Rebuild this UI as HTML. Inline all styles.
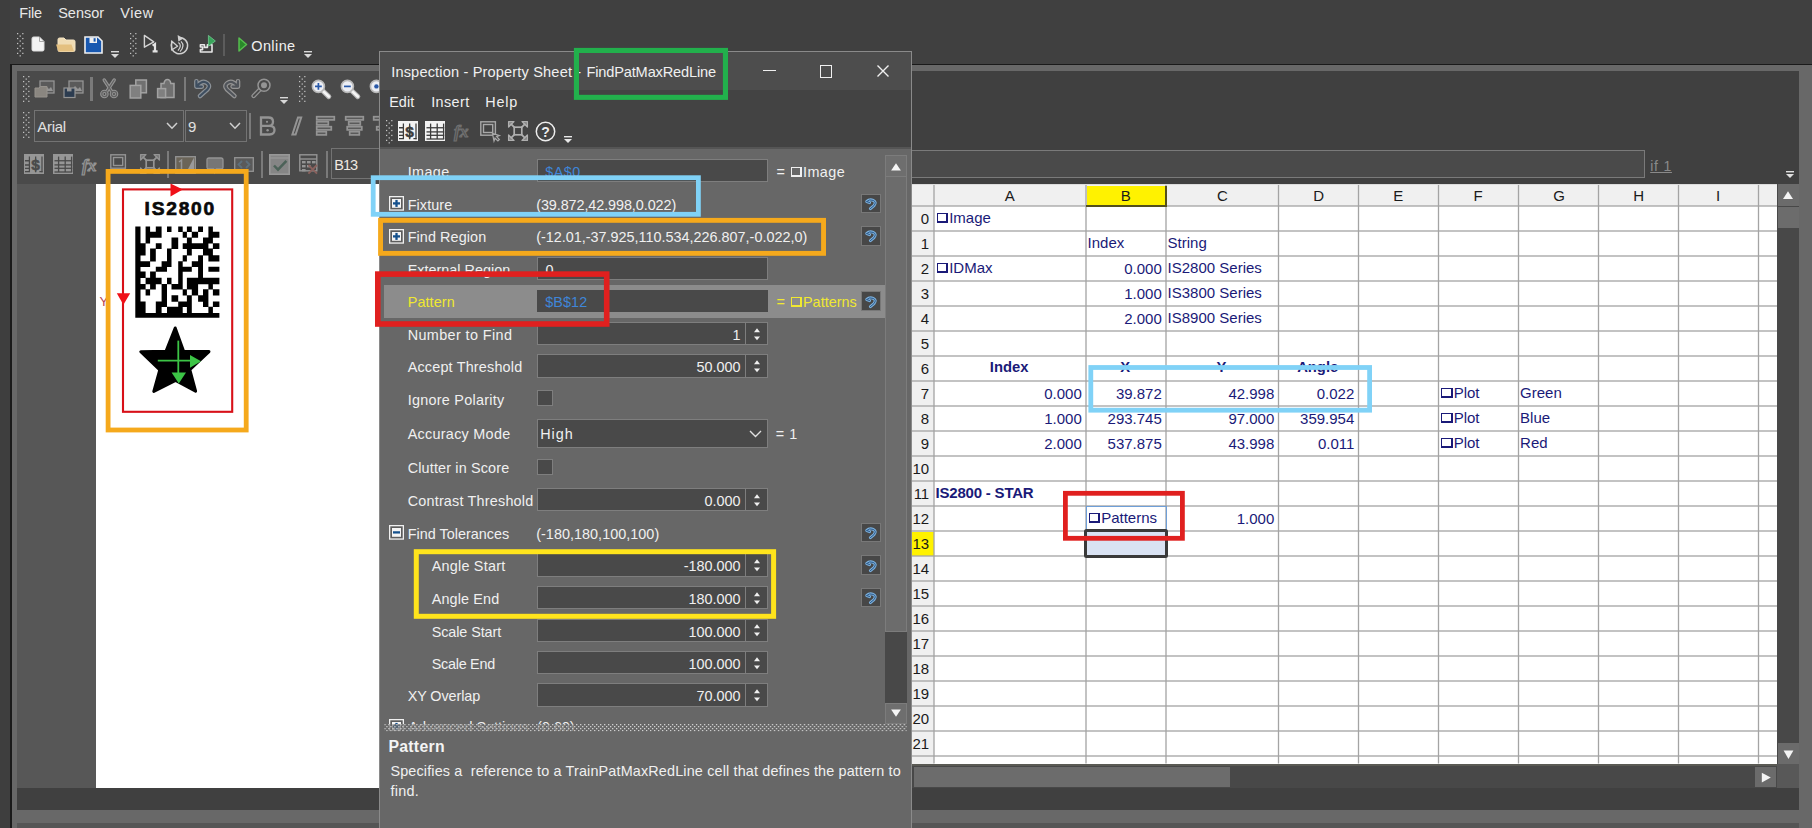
<!DOCTYPE html>
<html lang="en"><head><meta charset="utf-8"><title>In-Sight Explorer</title>
<style>
html,body{margin:0;padding:0;}
body{width:1812px;height:828px;overflow:hidden;background:#404040;position:relative;
font-family:"Liberation Sans",sans-serif;}
.a{position:absolute;box-sizing:border-box;}
.t{position:absolute;white-space:pre;line-height:1;}
svg{overflow:visible;}
</style></head>
<body>
<div class="a" style="left:0px;top:0px;width:10px;height:828px;background:#3e3e3e;"></div>
<div class="a" style="left:10px;top:64px;width:1802px;height:764px;background:#1a1a1a;"></div>
<div class="a" style="left:11.5px;top:65px;width:1801px;height:763px;background:#686868;"></div>
<div class="a" style="left:17px;top:71px;width:1782px;height:113px;background:#404040;"></div>
<div class="a" style="left:17px;top:71px;width:894px;height:113px;background:#4a4a4a;"></div>
<div class="a" style="left:17px;top:788px;width:1782px;height:22px;background:#404040;"></div>
<div class="a" style="left:17px;top:810px;width:1782px;height:13px;background:#686868;"></div>
<div class="a" style="left:17px;top:823px;width:1782px;height:5px;background:#555555;"></div>
<span id="t0" class="t" style="top:5.73px;font-size:14.5px;color:#e8e8e8;left:19.20px;letter-spacing:-0.125px;">File</span>
<span id="t1" class="t" style="top:5.73px;font-size:14.5px;color:#e8e8e8;left:58.20px;letter-spacing:0.009px;">Sensor</span>
<span id="t2" class="t" style="top:5.73px;font-size:14.5px;color:#e8e8e8;left:120.20px;letter-spacing:0.609px;">View</span>
<svg class="a" style="left:17px;top:33px;" width="7" height="24" viewBox="0 0 7 24"><g fill="#c4c4c4"><rect x="0" y="0.00" width="1.25" height="1.25"/><rect x="5.2" y="0.00" width="1.25" height="1.25"/><rect x="2.6" y="2.47" width="1.25" height="1.25"/><rect x="0" y="4.94" width="1.25" height="1.25"/><rect x="5.2" y="4.94" width="1.25" height="1.25"/><rect x="2.6" y="7.41" width="1.25" height="1.25"/><rect x="0" y="9.88" width="1.25" height="1.25"/><rect x="5.2" y="9.88" width="1.25" height="1.25"/><rect x="2.6" y="12.35" width="1.25" height="1.25"/><rect x="0" y="14.82" width="1.25" height="1.25"/><rect x="5.2" y="14.82" width="1.25" height="1.25"/><rect x="2.6" y="17.29" width="1.25" height="1.25"/><rect x="0" y="19.76" width="1.25" height="1.25"/><rect x="5.2" y="19.76" width="1.25" height="1.25"/><rect x="2.6" y="22.23" width="1.25" height="1.25"/></g></svg>
<svg class="a" style="left:31px;top:36px;" width="14" height="16" viewBox="0 0 14 16"><path d="M1 2.5Q1 1 2.5 1H8.5L13 5.5V13.5Q13 15 11.5 15H2.5Q1 15 1 13.5Z" fill="#f4f4f4" stroke="#dcdcdc" stroke-width="1"/><path d="M8.5 1V5.5H13" fill="none" stroke="#a8a8a8" stroke-width="1"/></svg>
<svg class="a" style="left:55px;top:36px;" width="22" height="17" viewBox="0 0 22 17"><path d="M3 3.5Q3 2 4.5 2H9l2 2h7.5Q20 4 20 5.5V14Q20 15.5 18.5 15.5H4.5Q3 15.5 3 14Z" fill="#f0dcb4" stroke="#f4e4c4" stroke-width="1"/><path d="M1 8.5h15.5l2.5 7H3.5Z" fill="#e4c080"/></svg>
<svg class="a" style="left:84px;top:36px;" width="19" height="18" viewBox="0 0 19 18"><path d="M1 1h13l4 4v12H1Z" fill="#1858b0" stroke="#f0f0f0" stroke-width="1.6"/><rect x="5.5" y="1.5" width="7.5" height="5.5" fill="#f0f0f0"/><rect x="9.6" y="2.2" width="2" height="3.4" fill="#1858b0"/></svg>
<svg class="a" style="left:111px;top:50.5px;" width="8" height="7" viewBox="0 0 8 7"><g fill="#d8d8d8"><rect x="0" y="0" width="8" height="1.4"/><path d="M0 3h8l-4 4z"/></g></svg>
<svg class="a" style="left:130px;top:33px;" width="7" height="24" viewBox="0 0 7 24"><g fill="#c4c4c4"><rect x="0" y="0.00" width="1.25" height="1.25"/><rect x="5.2" y="0.00" width="1.25" height="1.25"/><rect x="2.6" y="2.47" width="1.25" height="1.25"/><rect x="0" y="4.94" width="1.25" height="1.25"/><rect x="5.2" y="4.94" width="1.25" height="1.25"/><rect x="2.6" y="7.41" width="1.25" height="1.25"/><rect x="0" y="9.88" width="1.25" height="1.25"/><rect x="5.2" y="9.88" width="1.25" height="1.25"/><rect x="2.6" y="12.35" width="1.25" height="1.25"/><rect x="0" y="14.82" width="1.25" height="1.25"/><rect x="5.2" y="14.82" width="1.25" height="1.25"/><rect x="2.6" y="17.29" width="1.25" height="1.25"/><rect x="0" y="19.76" width="1.25" height="1.25"/><rect x="5.2" y="19.76" width="1.25" height="1.25"/><rect x="2.6" y="22.23" width="1.25" height="1.25"/></g></svg>
<svg class="a" style="left:143px;top:34px;" width="16" height="20" viewBox="0 0 16 20"><path d="M1.4 1.4V13.2L10.8 7.8Z" fill="none" stroke="#d4d4d4" stroke-width="1.4" stroke-linejoin="round"/><path d="M9.6 11.6L12 10V16.4M9.6 17.4H14.6" fill="none" stroke="#e4e4e4" stroke-width="2.2"/></svg>
<svg class="a" style="left:169px;top:34px;" width="20" height="22" viewBox="0 0 20 22"><path d="M10.4 3.4A8.2 8.2 0 1 1 3 8" fill="none" stroke="#d0d0d0" stroke-width="1.5"/><path d="M2.6 7L2.6 16L8.6 12.2Z" fill="none" stroke="#d0d0d0" stroke-width="1.3" stroke-linejoin="round"/><path d="M8.6 1L14.4 4.6L9.4 7.4Z" fill="#d0d0d0"/><path d="M9.4 8.6Q13.4 11.4 9 16.6M12 7.4Q16.4 12 11 17.6" fill="none" stroke="#d0d0d0" stroke-width="1.2"/></svg>
<svg class="a" style="left:198px;top:34px;" width="19" height="20" viewBox="0 0 19 20"><path d="M2.4 10.8H6.4V13.4H9.4V10.8H14V18H2.4V15.6H4.6V13H2.4Z" fill="none" stroke="#e6e6e6" stroke-width="1.6" stroke-linejoin="round"/><path d="M10.4 1.4L17.4 7L10.4 12.2Z" fill="#38a45a" stroke="#7cd09a" stroke-width=".7"/></svg>
<div class="a" style="left:223.10000000000002px;top:33.5px;width:2.4px;height:22.1px;background:#5c5c5c;"></div>
<svg class="a" style="left:238px;top:37px;" width="10" height="15" viewBox="0 0 10 15"><path d="M1 1L8.6 7.5L1 14Z" fill="#2a8a2a" stroke="#58c050" stroke-width="1.4" stroke-linejoin="round"/></svg>
<span id="t3" class="t" style="top:38.83px;font-size:14.5px;color:#f0f0f0;left:251.20px;letter-spacing:0.416px;">Online</span>
<svg class="a" style="left:304px;top:50.5px;" width="8" height="7" viewBox="0 0 8 7"><g fill="#d8d8d8"><rect x="0" y="0" width="8" height="1.4"/><path d="M0 3h8l-4 4z"/></g></svg>
<svg class="a" style="left:23.2px;top:76px;" width="7" height="26" viewBox="0 0 7 26"><g fill="#c4c4c4"><rect x="0" y="0.00" width="1.25" height="1.25"/><rect x="5.2" y="0.00" width="1.25" height="1.25"/><rect x="2.6" y="2.47" width="1.25" height="1.25"/><rect x="0" y="4.94" width="1.25" height="1.25"/><rect x="5.2" y="4.94" width="1.25" height="1.25"/><rect x="2.6" y="7.41" width="1.25" height="1.25"/><rect x="0" y="9.88" width="1.25" height="1.25"/><rect x="5.2" y="9.88" width="1.25" height="1.25"/><rect x="2.6" y="12.35" width="1.25" height="1.25"/><rect x="0" y="14.82" width="1.25" height="1.25"/><rect x="5.2" y="14.82" width="1.25" height="1.25"/><rect x="2.6" y="17.29" width="1.25" height="1.25"/><rect x="0" y="19.76" width="1.25" height="1.25"/><rect x="5.2" y="19.76" width="1.25" height="1.25"/><rect x="2.6" y="22.23" width="1.25" height="1.25"/><rect x="0" y="24.70" width="1.25" height="1.25"/><rect x="5.2" y="24.70" width="1.25" height="1.25"/></g></svg>
<svg class="a" style="left:34px;top:80px;" width="21" height="18" viewBox="0 0 21 18"><rect x="6" y="1" width="14" height="12" fill="#5a5a5a" stroke="#949494" stroke-width="1.3"/><path d="M8 11l4-5l3 3l2-2l2 4z" fill="#949494"/><path d="M1 8h4l1.5-1.5H13V17H1Z" fill="#8a8680" stroke="#96928c" stroke-width="1"/></svg>
<svg class="a" style="left:63px;top:80px;" width="21" height="18" viewBox="0 0 21 18"><rect x="6" y="1" width="14" height="12" fill="#5a5a5a" stroke="#949494" stroke-width="1.3"/><path d="M8 11l4-5l3 3l2-2l2 4z" fill="#949494"/><rect x="1" y="8" width="11" height="9.5" fill="#2c3c50" stroke="#949494" stroke-width="1.2"/><rect x="4" y="8" width="4.5" height="3.4" fill="#949494"/></svg>
<div class="a" style="left:90.39999999999999px;top:77px;width:2.4px;height:24px;background:#7a7a7a;"></div>
<svg class="a" style="left:100px;top:78px;" width="19" height="21" viewBox="0 0 19 21"><g fill="none" stroke="#949494" stroke-width="3.4" stroke-linecap="round"><path d="M4.2 2L11.6 13.4"/><path d="M14.2 2L6.8 13.4"/><circle cx="4.4" cy="16" r="2.6"/><circle cx="14" cy="16" r="2.6"/></g><g fill="none" stroke="#626262" stroke-width="1.2" stroke-linecap="round"><path d="M4.2 2L11.6 13.4"/><path d="M14.2 2L6.8 13.4"/><circle cx="4.4" cy="16" r="2.6"/><circle cx="14" cy="16" r="2.6"/></g></svg>
<svg class="a" style="left:129px;top:79px;" width="19" height="20" viewBox="0 0 19 20"><rect x="6.8" y="1" width="10.6" height="12.8" fill="#707070" stroke="#a2a2a2" stroke-width="1.5"/><rect x="1.2" y="6.4" width="10.6" height="12.6" fill="#808080" stroke="#a2a2a2" stroke-width="1.5"/></svg>
<svg class="a" style="left:156px;top:78px;" width="19" height="21" viewBox="0 0 19 21"><path d="M5 5.4h3Q8.6 1.4 11.4 1.4T14.8 5.4H18V19.6H5Z" fill="#707070" stroke="#a2a2a2" stroke-width="1.5"/><rect x="1.6" y="10.6" width="8" height="9" fill="#808080" stroke="#a2a2a2" stroke-width="1.5"/></svg>
<div class="a" style="left:183.8px;top:77px;width:2.4px;height:24px;background:#7a7a7a;"></div>
<svg class="a" style="left:193px;top:78px;" width="20" height="21" viewBox="0 0 20 21"><path d="M3.4 3.2V8.6H8.8M4 8Q9.6 1.6 14.2 5.2T11.4 14L7 18" fill="none" stroke="#8c9298" stroke-width="4.6" stroke-linecap="round" stroke-linejoin="round"/><path d="M3.4 3.2V8.6H8.8M4 8Q9.6 1.6 14.2 5.2T11.4 14L7 18" fill="none" stroke="#3e4e60" stroke-width="2.2" stroke-linecap="round" stroke-linejoin="round"/></svg>
<svg class="a" style="left:222px;top:78px;" width="20" height="21" viewBox="0 0 20 21"><g transform="translate(19.4 0) scale(-1 1)"><path d="M3.4 3.2V8.6H8.8M4 8Q9.6 1.6 14.2 5.2T11.4 14L7 18" fill="none" stroke="#949494" stroke-width="4.6" stroke-linecap="round" stroke-linejoin="round"/><path d="M3.4 3.2V8.6H8.8M4 8Q9.6 1.6 14.2 5.2T11.4 14L7 18" fill="none" stroke="#50545a" stroke-width="2.2" stroke-linecap="round" stroke-linejoin="round"/></g></svg>
<svg class="a" style="left:251px;top:78px;" width="22" height="21" viewBox="0 0 22 21"><path d="M8.6 11.8L2.6 18" stroke="#949494" stroke-width="4.4" stroke-linecap="round"/><path d="M8.6 11.8L2.6 18" stroke="#4a4a4a" stroke-width="1.8" stroke-linecap="round"/><circle cx="13" cy="7.2" r="6" fill="#4a4a4a" stroke="#949494" stroke-width="1.5"/><circle cx="13" cy="7.2" r="3" fill="#949494"/></svg>
<svg class="a" style="left:280px;top:96.5px;" width="8" height="7" viewBox="0 0 8 7"><g fill="#d8d8d8"><rect x="0" y="0" width="8" height="1.4"/><path d="M0 3h8l-4 4z"/></g></svg>
<svg class="a" style="left:299.4px;top:76px;" width="7" height="26" viewBox="0 0 7 26"><g fill="#c4c4c4"><rect x="0" y="0.00" width="1.25" height="1.25"/><rect x="5.2" y="0.00" width="1.25" height="1.25"/><rect x="2.6" y="2.47" width="1.25" height="1.25"/><rect x="0" y="4.94" width="1.25" height="1.25"/><rect x="5.2" y="4.94" width="1.25" height="1.25"/><rect x="2.6" y="7.41" width="1.25" height="1.25"/><rect x="0" y="9.88" width="1.25" height="1.25"/><rect x="5.2" y="9.88" width="1.25" height="1.25"/><rect x="2.6" y="12.35" width="1.25" height="1.25"/><rect x="0" y="14.82" width="1.25" height="1.25"/><rect x="5.2" y="14.82" width="1.25" height="1.25"/><rect x="2.6" y="17.29" width="1.25" height="1.25"/><rect x="0" y="19.76" width="1.25" height="1.25"/><rect x="5.2" y="19.76" width="1.25" height="1.25"/><rect x="2.6" y="22.23" width="1.25" height="1.25"/><rect x="0" y="24.70" width="1.25" height="1.25"/><rect x="5.2" y="24.70" width="1.25" height="1.25"/></g></svg>
<svg class="a" style="left:311px;top:79px;" width="21" height="21" viewBox="0 0 21 21"><path d="M12 12L17.8 17.6" stroke="#b4b4b4" stroke-width="5" stroke-linecap="round"/><path d="M12 12L17.8 17.6" stroke="#f4f4f4" stroke-width="2.8" stroke-linecap="round"/><circle cx="7.4" cy="7.4" r="6" fill="#eceef4" stroke="#b8b8b8" stroke-width="1.6"/><path d="M4 7.4h6.8M7.4 4v6.8" stroke="#2858a8" stroke-width="1.7"/></svg>
<svg class="a" style="left:340.4px;top:79px;" width="21" height="21" viewBox="0 0 21 21"><path d="M12 12L17.8 17.6" stroke="#b4b4b4" stroke-width="5" stroke-linecap="round"/><path d="M12 12L17.8 17.6" stroke="#f4f4f4" stroke-width="2.8" stroke-linecap="round"/><circle cx="7.4" cy="7.4" r="6" fill="#eceef4" stroke="#b8b8b8" stroke-width="1.6"/><path d="M4 7.4h6.8" stroke="#2858a8" stroke-width="1.7"/></svg>
<svg class="a" style="left:368.6px;top:79px;" width="16" height="16" viewBox="0 0 16 16"><circle cx="7.4" cy="7.4" r="6" fill="#eceef4" stroke="#b8b8b8" stroke-width="1.6"/><circle cx="7.4" cy="7.4" r="2.2" fill="#2858a8"/></svg>
<svg class="a" style="left:23.2px;top:112px;" width="7" height="26" viewBox="0 0 7 26"><g fill="#c4c4c4"><rect x="0" y="0.00" width="1.25" height="1.25"/><rect x="5.2" y="0.00" width="1.25" height="1.25"/><rect x="2.6" y="2.47" width="1.25" height="1.25"/><rect x="0" y="4.94" width="1.25" height="1.25"/><rect x="5.2" y="4.94" width="1.25" height="1.25"/><rect x="2.6" y="7.41" width="1.25" height="1.25"/><rect x="0" y="9.88" width="1.25" height="1.25"/><rect x="5.2" y="9.88" width="1.25" height="1.25"/><rect x="2.6" y="12.35" width="1.25" height="1.25"/><rect x="0" y="14.82" width="1.25" height="1.25"/><rect x="5.2" y="14.82" width="1.25" height="1.25"/><rect x="2.6" y="17.29" width="1.25" height="1.25"/><rect x="0" y="19.76" width="1.25" height="1.25"/><rect x="5.2" y="19.76" width="1.25" height="1.25"/><rect x="2.6" y="22.23" width="1.25" height="1.25"/><rect x="0" y="24.70" width="1.25" height="1.25"/><rect x="5.2" y="24.70" width="1.25" height="1.25"/></g></svg>
<div class="a" style="left:34px;top:110px;width:150px;height:32px;background:#4a4a4a;border:1px solid #737373;"></div>
<span id="t4" class="t" style="top:119.30px;font-size:15px;color:#e0e0e0;left:37.20px;letter-spacing:-0.254px;">Arial</span>
<svg class="a" style="left:166px;top:122px;" width="12" height="8" viewBox="0 0 12 8"><path d="M1 1l5 5.2l5-5.2" fill="none" stroke="#d0d0d0" stroke-width="1.5"/></svg>
<div class="a" style="left:185px;top:110px;width:62px;height:32px;background:#4a4a4a;border:1px solid #737373;"></div>
<span id="t5" class="t" style="top:119.30px;font-size:15px;color:#e0e0e0;left:188.00px;">9</span>
<svg class="a" style="left:229px;top:122px;" width="12" height="8" viewBox="0 0 12 8"><path d="M1 1l5 5.2l5-5.2" fill="none" stroke="#d0d0d0" stroke-width="1.5"/></svg>
<div class="a" style="left:248.8px;top:113px;width:2.4px;height:26px;background:#7a7a7a;"></div>
<svg class="a" style="left:259px;top:116px;" width="18" height="20" viewBox="0 0 18 20"><path d="M2 1.5h7.5Q14 1.5 14 5.7T9.5 9.8H2Zm0 8.3h8.5Q15.5 9.8 15.5 14T10.5 18.5H2Z" fill="none" stroke="#949494" stroke-width="2.3"/><circle cx="8" cy="5.8" r="1.1" fill="#949494"/><circle cx="8.6" cy="14.2" r="1.2" fill="#949494"/></svg>
<svg class="a" style="left:291px;top:116px;" width="12" height="20" viewBox="0 0 12 20"><path d="M7 1.5h3.2L4.6 18.5H1.4Z" fill="none" stroke="#949494" stroke-width="2"/></svg>
<svg class="a" style="left:315.5px;top:116px;" width="20" height="20" viewBox="0 0 20 20"><rect x="0.7" y="0.7" width="17.6" height="3.2" fill="#5a5a5a" stroke="#949494" stroke-width="1.7"/><rect x="0.7" y="5.7" width="11.6" height="3.2" fill="#5a5a5a" stroke="#949494" stroke-width="1.7"/><rect x="0.7" y="10.7" width="14.6" height="3.2" fill="#5a5a5a" stroke="#949494" stroke-width="1.7"/><rect x="0.7" y="15.7" width="9.6" height="3.2" fill="#5a5a5a" stroke="#949494" stroke-width="1.7"/></svg>
<svg class="a" style="left:345px;top:116px;" width="20" height="20" viewBox="0 0 20 20"><rect x="0.7" y="0.7" width="17.6" height="3.2" fill="#5a5a5a" stroke="#949494" stroke-width="1.7"/><rect x="3.7" y="5.7" width="11.6" height="3.2" fill="#5a5a5a" stroke="#949494" stroke-width="1.7"/><rect x="2.2" y="10.7" width="14.6" height="3.2" fill="#5a5a5a" stroke="#949494" stroke-width="1.7"/><rect x="4.7" y="15.7" width="9.6" height="3.2" fill="#5a5a5a" stroke="#949494" stroke-width="1.7"/></svg>
<svg class="a" style="left:373px;top:116px;" width="20" height="20" viewBox="0 0 20 20"><rect x="0.7" y="0.7" width="17.6" height="3.2" fill="#5a5a5a" stroke="#949494" stroke-width="1.7"/><rect x="6.7" y="5.7" width="11.6" height="3.2" fill="#5a5a5a" stroke="#949494" stroke-width="1.7"/><rect x="3.7" y="10.7" width="14.6" height="3.2" fill="#5a5a5a" stroke="#949494" stroke-width="1.7"/><rect x="8.7" y="15.7" width="9.6" height="3.2" fill="#5a5a5a" stroke="#949494" stroke-width="1.7"/></svg>
<svg class="a" style="left:24px;top:154.3px;" width="20" height="20" viewBox="0 0 20 20"><rect x="0" y="0" width="20" height="20" fill="#969696"/><g stroke="#4a4a4a" stroke-width="1.3" fill="none"><path d="M1 6.75h4.6M1 11h4.6M1 14.3h4.6M1 17.6h5M15.4 17.6h3.2"/><path d="M5.4 2.6V17.6M18 2.6V18.2" stroke-width="1.25"/></g><text x="11.6" y="15.9" font-size="15.4" font-weight="bold" text-anchor="middle" fill="#4a4a4a" stroke="#4a4a4a" stroke-width=".5" font-family="Liberation Sans, sans-serif">$</text><path d="M11.65 2.4v15.8" stroke="#4a4a4a" stroke-width="1.3"/></svg>
<svg class="a" style="left:53px;top:154.3px;" width="20" height="20" viewBox="0 0 20 20"><rect x="0" y="0" width="20" height="20" fill="#969696"/><g stroke="#4a4a4a" stroke-width="1.3"><path d="M1.5 6.75h17.7"/><path d="M1.5 10.9h17.7"/><path d="M1.5 14.3h17.7"/><path d="M1.5 18h17.7"/><path d="M5.6 2.6v15.4"/><path d="M12.2 2.6v15.4"/><path d="M18.6 2.6v15.4"/></g></svg>
<svg class="a" style="left:82px;top:154.6px;" width="20" height="20" viewBox="0 0 20 20"><text x="0" y="15.5" font-size="17.5" font-style="italic" font-weight="bold" fill="#949494" fill-opacity=".3" stroke="#949494" stroke-width="1.1" font-family="Liberation Serif, serif">fx</text></svg>
<svg class="a" style="left:110.4px;top:154.3px;" width="20" height="20" viewBox="0 0 20 20"><rect x=".8" y=".8" width="14.6" height="13.4" fill="none" stroke="#949494" stroke-width="1.4"/><rect x="3.5" y="3.5" width="9.2" height="8" fill="none" stroke="#949494" stroke-width="1.4"/><path d="M14.6 15v3.2h4" fill="none" stroke="#949494" stroke-width="1.4"/></svg>
<svg class="a" style="left:139.6px;top:154.3px;" width="20" height="20" viewBox="0 0 20 20"><rect x="6.2" y="6.2" width="7.6" height="7.6" fill="none" stroke="#949494" stroke-width="1.7"/><path d="M0.6 6.0V0.6H6.0Z" fill="#949494" fill-opacity=".55" stroke="#949494" stroke-width="1.3" stroke-linejoin="round"/><path d="M2.6 2.6L6.3999999999999995 6.3999999999999995" stroke="#949494" stroke-width="1.8"/><path d="M19.4 6.0V0.6H13.999999999999998Z" fill="#949494" fill-opacity=".55" stroke="#949494" stroke-width="1.3" stroke-linejoin="round"/><path d="M17.4 2.6L13.599999999999998 6.3999999999999995" stroke="#949494" stroke-width="1.8"/><path d="M0.6 13.999999999999998V19.4H6.0Z" fill="#949494" fill-opacity=".55" stroke="#949494" stroke-width="1.3" stroke-linejoin="round"/><path d="M2.6 17.4L6.3999999999999995 13.599999999999998" stroke="#949494" stroke-width="1.8"/><path d="M19.4 13.999999999999998V19.4H13.999999999999998Z" fill="#949494" fill-opacity=".55" stroke="#949494" stroke-width="1.3" stroke-linejoin="round"/><path d="M17.4 17.4L13.599999999999998 13.599999999999998" stroke="#949494" stroke-width="1.8"/></svg>
<div class="a" style="left:166.8px;top:151px;width:2.4px;height:27px;background:#7a7a7a;"></div>
<svg class="a" style="left:175px;top:156px;" width="21" height="18" viewBox="0 0 21 18"><rect x=".7" y=".7" width="19.6" height="16.6" fill="#6a6458" stroke="#949494" stroke-width="1.3"/><path d="M11 17L19 1.5V17Z" fill="#9a9a9a"/><path d="M4 6l2.5-2V14" fill="none" stroke="#949494" stroke-width="1.5"/></svg>
<svg class="a" style="left:206px;top:157px;" width="18" height="17" viewBox="0 0 18 17"><path d="M3 1h12Q17 1 17 3v7Q17 12 15 12H10.5l-2 3.5l-1-3.5H3Q1 12 1 10V3Q1 1 3 1Z" fill="#767676" stroke="#949494" stroke-width="1.3"/></svg>
<svg class="a" style="left:234px;top:157px;" width="20" height="15" viewBox="0 0 20 15"><rect x=".7" y=".7" width="18.6" height="13.6" fill="#5a5a5a" stroke="#949494" stroke-width="1.3"/><path d="M8 4L4.5 7.5L8 11M12 4l3.5 3.5L12 11" fill="none" stroke="#5e707c" stroke-width="1.8"/></svg>
<div class="a" style="left:260.5px;top:151px;width:2.4px;height:27px;background:#7a7a7a;"></div>
<svg class="a" style="left:269px;top:154px;" width="21" height="21" viewBox="0 0 21 21"><rect x=".8" y=".8" width="19.4" height="19.4" fill="#858585" stroke="#989898" stroke-width="1.6"/><path d="M1 4h19" stroke="#989898" stroke-width="1.3"/><path d="M5 11.5l4 4.2L17.4 6.8" fill="none" stroke="#4c6258" stroke-width="2.5"/></svg>
<svg class="a" style="left:299px;top:154px;" width="21" height="22" viewBox="0 0 21 22"><g stroke="#949494" stroke-width="1.4" fill="none"><rect x=".8" y=".8" width="17" height="16"/><path d="M1 5h17"/></g><g fill="#949494"><rect x="3" y="7" width="3.6" height="2.4"/><rect x="8" y="7" width="3.6" height="2.4"/><rect x="13" y="7" width="3.6" height="2.4"/><rect x="3" y="11" width="3.6" height="2.4"/><rect x="8" y="11" width="3.6" height="2.4"/><rect x="3" y="15" width="3.6" height="2.4"/></g><path d="M9.4 11l8.6 8.6M18 11l-8.6 8.6" stroke="#8a625e" stroke-width="1.9"/></svg>
<div class="a" style="left:325.5px;top:151px;width:2.4px;height:27px;background:#7a7a7a;"></div>
<div class="a" style="left:331px;top:148px;width:60px;height:31px;background:#4a4a4a;border:1px solid #737373;"></div>
<span id="t6" class="t" style="top:157.83px;font-size:14.5px;color:#f0e8e0;left:334.20px;letter-spacing:-0.906px;">B13</span>
<div class="a" style="left:396px;top:150px;width:1249px;height:28px;background:#4a4a4a;border:1px solid #7a7a7a;"></div>
<span id="t7" class="t" style="top:159.15px;font-size:14px;color:#8a8a8a;left:1650.20px;letter-spacing:0.771px;text-decoration:underline;">if 1</span>
<svg class="a" style="left:1785.5px;top:171px;" width="8" height="7" viewBox="0 0 8 7"><g fill="#e0e0e0"><rect x="0" y="0" width="8" height="1.4"/><path d="M0 3h8l-4 4z"/></g></svg>
<div class="a" style="left:17px;top:184px;width:79px;height:604px;background:#575757;"></div>
<div class="a" style="left:95.5px;top:184px;width:300px;height:604px;background:#ffffff;"></div>
<svg class="a" style="left:0px;top:0px;" width="1812" height="828" viewBox="0 0 1812 828"><rect x="123" y="189.4" width="109.2" height="222.4" fill="none" stroke="#d81018" stroke-width="2.1"/><path d="M170.5 183.6L182.8 189.6L170.5 196.6Z" fill="#f01018"/><path d="M116.8 293.2H130.2L123.4 304.8Z" fill="#f01018"/><text x="144.6" y="215" font-size="19.2" font-weight="bold" fill="#0a0a0a" stroke="#0a0a0a" stroke-width=".7" textLength="69.6" lengthAdjust="spacing" font-family="Liberation Sans, sans-serif">IS2800</text><text x="99.5" y="306" font-size="13" fill="#b84050" font-family="Liberation Sans, sans-serif">Y</text><path d="M135.3 226.55H140.5V231.95H135.3ZM145.6 226.55H150.1V231.95H145.6ZM155.8 226.55H161.6V231.95H155.8ZM167.0 226.55H171.5V231.95H167.0ZM178.2 226.55H182.7V231.95H178.2ZM186.9 226.55H191.8V231.95H186.9ZM198.1 226.55H203.0V231.95H198.1ZM208.4 226.55H212.9V231.95H208.4ZM135.3 231.65H140.5V237.75H135.3ZM145.6 231.65H161.6V237.75H145.6ZM182.7 231.65H186.9V237.75H182.7ZM191.8 231.65H198.1V237.75H191.8ZM208.4 231.65H219.4V237.75H208.4ZM135.3 237.45H140.5V243.45H135.3ZM145.6 237.45H150.1V243.45H145.6ZM171.5 237.45H178.2V243.45H171.5ZM186.9 237.45H191.8V243.45H186.9ZM203.0 237.45H212.9V243.45H203.0ZM135.3 243.15H145.6V248.90H135.3ZM155.8 243.15H161.6V248.90H155.8ZM171.5 243.15H178.2V248.90H171.5ZM182.7 243.15H208.4V248.90H182.7ZM212.9 243.15H219.4V248.90H212.9ZM135.3 248.60H145.6V255.55H135.3ZM150.1 248.60H155.8V255.55H150.1ZM167.0 248.60H171.5V255.55H167.0ZM186.9 248.60H191.8V255.55H186.9ZM203.0 248.60H212.9V255.55H203.0ZM135.3 255.25H140.5V261.55H135.3ZM150.1 255.25H155.8V261.55H150.1ZM167.0 255.25H171.5V261.55H167.0ZM182.7 255.25H186.9V261.55H182.7ZM198.1 255.25H203.0V261.55H198.1ZM208.4 255.25H219.4V261.55H208.4ZM135.3 261.25H150.1V267.05H135.3ZM161.6 261.25H171.5V267.05H161.6ZM178.2 261.25H182.7V267.05H178.2ZM191.8 261.25H203.0V267.05H191.8ZM135.3 266.75H140.5V271.85H135.3ZM155.8 266.75H167.0V271.85H155.8ZM178.2 266.75H191.8V271.85H178.2ZM198.1 266.75H203.0V271.85H198.1ZM208.4 266.75H219.4V271.85H208.4ZM135.3 271.55H145.6V277.95H135.3ZM150.1 271.55H155.8V277.95H150.1ZM178.2 271.55H182.7V277.95H178.2ZM198.1 271.55H203.0V277.95H198.1ZM135.3 277.65H140.5V284.35H135.3ZM145.6 277.65H161.6V284.35H145.6ZM167.0 277.65H171.5V284.35H167.0ZM178.2 277.65H182.7V284.35H178.2ZM186.9 277.65H219.4V284.35H186.9ZM135.3 284.05H145.6V289.45H135.3ZM150.1 284.05H155.8V289.45H150.1ZM161.6 284.05H167.0V289.45H161.6ZM171.5 284.05H182.7V289.45H171.5ZM186.9 284.05H198.1V289.45H186.9ZM208.4 284.05H212.9V289.45H208.4ZM135.3 289.15H140.5V295.55H135.3ZM145.6 289.15H150.1V295.55H145.6ZM161.6 289.15H167.0V295.55H161.6ZM182.7 289.15H186.9V295.55H182.7ZM191.8 289.15H198.1V295.55H191.8ZM203.0 289.15H208.4V295.55H203.0ZM212.9 289.15H219.4V295.55H212.9ZM135.3 295.25H140.5V301.85H135.3ZM161.6 295.25H167.0V301.85H161.6ZM171.5 295.25H178.2V301.85H171.5ZM186.9 295.25H191.8V301.85H186.9ZM198.1 295.25H208.4V301.85H198.1ZM135.3 301.55H145.6V306.95H135.3ZM155.8 301.55H167.0V306.95H155.8ZM178.2 301.55H191.8V306.95H178.2ZM203.0 301.55H208.4V306.95H203.0ZM212.9 301.55H219.4V306.95H212.9ZM135.3 306.65H145.6V313.35H135.3ZM155.8 306.65H161.6V313.35H155.8ZM167.0 306.65H182.7V313.35H167.0ZM186.9 306.65H191.8V313.35H186.9ZM208.4 306.65H212.9V313.35H208.4ZM135.3 313.05H219.4V317.85H135.3Z" fill="#000"/><path d="M175.2 328L183.6 351.2L209 351.6L189.8 369.6L195.6 391.2L175.6 380.4L153.8 391.4L159.8 369.8L140.8 351.7L166 351.2Z" fill="#000" stroke="#000" stroke-width="3" stroke-linejoin="round"/><g stroke="#3cc446" stroke-width="1.8" fill="#3cc446"><path d="M178.3 340.6V373"/><path d="M157.8 360.6H190.4"/></g><path d="M171.6 372.4H186L178.8 383.4Z" fill="#3cc446"/><path d="M190 355V367.8L201 361.2Z" fill="#3cc446"/></svg>
<div class="a" style="left:912px;top:184px;width:865px;height:579.5px;background:#ffffff;"></div>
<div class="a" style="left:912px;top:184px;width:865px;height:22px;background:#f0f0f0;"></div>
<div class="a" style="left:912px;top:184px;width:22px;height:579.5px;background:#f0f0f0;"></div>
<div class="a" style="left:1086.5px;top:185.6px;width:79.5px;height:20px;background:#fff200;"></div>
<div class="a" style="left:912px;top:531.5px;width:21.5px;height:24.5px;background:#fff200;"></div>
<svg class="a" style="left:0px;top:0px;" width="1812" height="828" viewBox="0 0 1812 828"><g fill="#a4a4a4"><rect x="933.35" y="184" width="1.3" height="579.5"/><rect x="1085.35" y="184" width="1.3" height="579.5"/><rect x="1165.35" y="184" width="1.3" height="579.5"/><rect x="1277.85" y="184" width="1.3" height="579.5"/><rect x="1357.85" y="184" width="1.3" height="579.5"/><rect x="1437.85" y="184" width="1.3" height="579.5"/><rect x="1517.85" y="184" width="1.3" height="579.5"/><rect x="1597.85" y="184" width="1.3" height="579.5"/><rect x="1677.85" y="184" width="1.3" height="579.5"/><rect x="1757.85" y="184" width="1.3" height="579.5"/><rect x="912" y="205.35" width="865" height="1.3"/><rect x="912" y="230.35" width="865" height="1.3"/><rect x="912" y="255.35" width="865" height="1.3"/><rect x="912" y="280.35" width="865" height="1.3"/><rect x="912" y="305.35" width="865" height="1.3"/><rect x="912" y="330.35" width="865" height="1.3"/><rect x="912" y="355.35" width="865" height="1.3"/><rect x="912" y="380.35" width="865" height="1.3"/><rect x="912" y="405.35" width="865" height="1.3"/><rect x="912" y="430.35" width="865" height="1.3"/><rect x="912" y="455.35" width="865" height="1.3"/><rect x="912" y="480.35" width="865" height="1.3"/><rect x="912" y="505.35" width="865" height="1.3"/><rect x="912" y="530.35" width="865" height="1.3"/><rect x="912" y="555.35" width="865" height="1.3"/><rect x="912" y="580.35" width="865" height="1.3"/><rect x="912" y="605.35" width="865" height="1.3"/><rect x="912" y="630.35" width="865" height="1.3"/><rect x="912" y="655.35" width="865" height="1.3"/><rect x="912" y="680.35" width="865" height="1.3"/><rect x="912" y="705.35" width="865" height="1.3"/><rect x="912" y="730.35" width="865" height="1.3"/><rect x="912" y="755.35" width="865" height="1.3"/></g></svg>
<div class="a" style="left:912px;top:184px;width:865px;height:1.2px;background:#dcdcdc;"></div>
<div class="a" style="left:1086px;top:205.2px;width:80.8px;height:1.5px;background:#54501c;"></div>
<div class="a" style="left:1165.4px;top:186px;width:1.4px;height:20px;background:#54501c;"></div>
<span id="t8" class="t" style="top:188.20px;font-size:15px;color:#1a1a1a;left:1004.70px;width:10px;text-align:center;">A</span>
<span id="t9" class="t" style="top:188.20px;font-size:15px;color:#1a1a1a;left:1120.70px;width:10px;text-align:center;">B</span>
<span id="t10" class="t" style="top:188.20px;font-size:15px;color:#1a1a1a;left:1216.95px;width:10px;text-align:center;">C</span>
<span id="t11" class="t" style="top:188.20px;font-size:15px;color:#1a1a1a;left:1313.20px;width:10px;text-align:center;">D</span>
<span id="t12" class="t" style="top:188.20px;font-size:15px;color:#1a1a1a;left:1393.20px;width:10px;text-align:center;">E</span>
<span id="t13" class="t" style="top:188.20px;font-size:15px;color:#1a1a1a;left:1473.20px;width:10px;text-align:center;">F</span>
<span id="t14" class="t" style="top:188.20px;font-size:15px;color:#1a1a1a;left:1553.20px;width:10px;text-align:center;">G</span>
<span id="t15" class="t" style="top:188.20px;font-size:15px;color:#1a1a1a;left:1633.20px;width:10px;text-align:center;">H</span>
<span id="t16" class="t" style="top:188.20px;font-size:15px;color:#1a1a1a;left:1713.20px;width:10px;text-align:center;">I</span>
<span id="t17" class="t" style="top:211.00px;font-size:15px;color:#1a1a1a;right:882.80px;">0</span>
<span id="t18" class="t" style="top:236.00px;font-size:15px;color:#1a1a1a;right:882.80px;">1</span>
<span id="t19" class="t" style="top:261.00px;font-size:15px;color:#1a1a1a;right:882.80px;">2</span>
<span id="t20" class="t" style="top:286.00px;font-size:15px;color:#1a1a1a;right:882.80px;">3</span>
<span id="t21" class="t" style="top:311.00px;font-size:15px;color:#1a1a1a;right:882.80px;">4</span>
<span id="t22" class="t" style="top:336.00px;font-size:15px;color:#1a1a1a;right:882.80px;">5</span>
<span id="t23" class="t" style="top:361.00px;font-size:15px;color:#1a1a1a;right:882.80px;">6</span>
<span id="t24" class="t" style="top:386.00px;font-size:15px;color:#1a1a1a;right:882.80px;">7</span>
<span id="t25" class="t" style="top:411.00px;font-size:15px;color:#1a1a1a;right:882.80px;">8</span>
<span id="t26" class="t" style="top:436.00px;font-size:15px;color:#1a1a1a;right:882.80px;">9</span>
<span id="t27" class="t" style="top:461.00px;font-size:15px;color:#1a1a1a;right:882.80px;">10</span>
<span id="t28" class="t" style="top:486.00px;font-size:15px;color:#1a1a1a;right:882.80px;">11</span>
<span id="t29" class="t" style="top:511.00px;font-size:15px;color:#1a1a1a;right:882.80px;">12</span>
<span id="t30" class="t" style="top:536.00px;font-size:15px;color:#1a1a1a;right:882.80px;">13</span>
<span id="t31" class="t" style="top:561.00px;font-size:15px;color:#1a1a1a;right:882.80px;">14</span>
<span id="t32" class="t" style="top:586.00px;font-size:15px;color:#1a1a1a;right:882.80px;">15</span>
<span id="t33" class="t" style="top:611.00px;font-size:15px;color:#1a1a1a;right:882.80px;">16</span>
<span id="t34" class="t" style="top:636.00px;font-size:15px;color:#1a1a1a;right:882.80px;">17</span>
<span id="t35" class="t" style="top:661.00px;font-size:15px;color:#1a1a1a;right:882.80px;">18</span>
<span id="t36" class="t" style="top:686.00px;font-size:15px;color:#1a1a1a;right:882.80px;">19</span>
<span id="t37" class="t" style="top:711.00px;font-size:15px;color:#1a1a1a;right:882.80px;">20</span>
<span id="t38" class="t" style="top:736.00px;font-size:15px;color:#1a1a1a;right:882.80px;">21</span>
<div class="a" style="left:936.9px;top:213.0px;width:11.2px;height:9.9px;border:1.3px solid #1a1a78;border-right-width:2.6px;border-bottom-width:2.2px;"></div>
<span id="t39" class="t" style="top:210.20px;font-size:15px;color:#1a1a78;left:949.20px;">Image</span>
<span id="t40" class="t" style="top:235.20px;font-size:15px;color:#1a1a78;left:1087.60px;">Index</span>
<span id="t41" class="t" style="top:235.20px;font-size:15px;color:#1a1a78;left:1167.60px;">String</span>
<div class="a" style="left:936.9px;top:263.0px;width:11.2px;height:9.9px;border:1.3px solid #1a1a78;border-right-width:2.6px;border-bottom-width:2.2px;"></div>
<span id="t42" class="t" style="top:260.20px;font-size:15px;color:#1a1a78;left:949.20px;">IDMax</span>
<span id="t43" class="t" style="top:260.50px;font-size:15px;color:#1a1a78;right:650.20px;">0.000</span>
<span id="t44" class="t" style="top:260.20px;font-size:15px;color:#1a1a78;left:1167.60px;">IS2800 Series</span>
<span id="t45" class="t" style="top:285.50px;font-size:15px;color:#1a1a78;right:650.20px;">1.000</span>
<span id="t46" class="t" style="top:285.20px;font-size:15px;color:#1a1a78;left:1167.60px;">IS3800 Series</span>
<span id="t47" class="t" style="top:310.50px;font-size:15px;color:#1a1a78;right:650.20px;">2.000</span>
<span id="t48" class="t" style="top:310.20px;font-size:15px;color:#1a1a78;left:1167.60px;">IS8900 Series</span>
<span id="t49" class="t" style="top:360.37px;font-size:14.8px;color:#1a1a78;font-weight:700;left:949.20px;width:120px;text-align:center;">Index</span>
<span id="t50" class="t" style="top:360.37px;font-size:14.8px;color:#1a1a78;font-weight:700;left:1065.20px;width:120px;text-align:center;">X</span>
<span id="t51" class="t" style="top:360.37px;font-size:14.8px;color:#1a1a78;font-weight:700;left:1161.45px;width:120px;text-align:center;">Y</span>
<span id="t52" class="t" style="top:360.37px;font-size:14.8px;color:#1a1a78;font-weight:700;left:1257.70px;width:120px;text-align:center;">Angle</span>
<span id="t53" class="t" style="top:385.50px;font-size:15px;color:#1a1a78;right:730.20px;">0.000</span>
<span id="t54" class="t" style="top:385.50px;font-size:15px;color:#1a1a78;right:650.20px;">39.872</span>
<span id="t55" class="t" style="top:385.50px;font-size:15px;color:#1a1a78;right:537.70px;">42.998</span>
<span id="t56" class="t" style="top:385.50px;font-size:15px;color:#1a1a78;right:457.70px;">0.022</span>
<div class="a" style="left:1441.4px;top:388.0px;width:11.2px;height:9.9px;border:1.3px solid #1a1a78;border-right-width:2.6px;border-bottom-width:2.2px;"></div>
<span id="t57" class="t" style="top:385.20px;font-size:15px;color:#1a1a78;left:1453.70px;">Plot</span>
<span id="t58" class="t" style="top:385.20px;font-size:15px;color:#1a1a78;left:1520.10px;">Green</span>
<span id="t59" class="t" style="top:410.50px;font-size:15px;color:#1a1a78;right:730.20px;">1.000</span>
<span id="t60" class="t" style="top:410.50px;font-size:15px;color:#1a1a78;right:650.20px;">293.745</span>
<span id="t61" class="t" style="top:410.50px;font-size:15px;color:#1a1a78;right:537.70px;">97.000</span>
<span id="t62" class="t" style="top:410.50px;font-size:15px;color:#1a1a78;right:457.70px;">359.954</span>
<div class="a" style="left:1441.4px;top:413.0px;width:11.2px;height:9.9px;border:1.3px solid #1a1a78;border-right-width:2.6px;border-bottom-width:2.2px;"></div>
<span id="t63" class="t" style="top:410.20px;font-size:15px;color:#1a1a78;left:1453.70px;">Plot</span>
<span id="t64" class="t" style="top:410.20px;font-size:15px;color:#1a1a78;left:1520.10px;">Blue</span>
<span id="t65" class="t" style="top:435.50px;font-size:15px;color:#1a1a78;right:730.20px;">2.000</span>
<span id="t66" class="t" style="top:435.50px;font-size:15px;color:#1a1a78;right:650.20px;">537.875</span>
<span id="t67" class="t" style="top:435.50px;font-size:15px;color:#1a1a78;right:537.70px;">43.998</span>
<span id="t68" class="t" style="top:435.50px;font-size:15px;color:#1a1a78;right:457.70px;">0.011</span>
<div class="a" style="left:1441.4px;top:438.0px;width:11.2px;height:9.9px;border:1.3px solid #1a1a78;border-right-width:2.6px;border-bottom-width:2.2px;"></div>
<span id="t69" class="t" style="top:435.20px;font-size:15px;color:#1a1a78;left:1453.70px;">Plot</span>
<span id="t70" class="t" style="top:435.20px;font-size:15px;color:#1a1a78;left:1520.10px;">Red</span>
<span id="t71" class="t" style="top:485.20px;font-size:15px;color:#1a1a78;font-weight:700;left:935.60px;letter-spacing:-0.208px;">IS2800 - STAR</span>
<div class="a" style="left:1086.2px;top:505.6px;width:80.8px;height:26px;border:1.5px solid #6f9fd8;"></div>
<div class="a" style="left:1088.9px;top:513.0px;width:11.2px;height:9.9px;border:1.3px solid #1a1a78;border-right-width:2.6px;border-bottom-width:2.2px;"></div>
<span id="t72" class="t" style="top:510.20px;font-size:15px;color:#1a1a78;left:1101.20px;">Patterns</span>
<span id="t73" class="t" style="top:510.50px;font-size:15px;color:#1a1a78;right:537.70px;">1.000</span>
<div class="a" style="left:1084.2px;top:528.9px;width:83.7px;height:28.8px;background:#d9e2f3;border:3.3px solid #3a3a3a;border-radius:2.5px;"></div>
<div class="a" style="left:1777px;top:184px;width:22px;height:604px;background:#484848;"></div>
<div class="a" style="left:1777.5px;top:184px;width:21px;height:22px;background:#6b6b6b;"></div>
<svg class="a" style="left:1781px;top:189.4px;" width="14" height="12" viewBox="0 0 14 12"><path d="M7 2.2L12 10H2Z" fill="#f4f4f4"/></svg>
<div class="a" style="left:1777.5px;top:207px;width:21px;height:21px;background:#6c6c6c;"></div>
<div class="a" style="left:1777.5px;top:743px;width:21px;height:20.5px;background:#6b6b6b;"></div>
<svg class="a" style="left:1781px;top:748px;" width="14" height="12" viewBox="0 0 14 12"><path d="M2.6 2.6H12.4L7.5 11Z" fill="#f4f4f4"/></svg>
<div class="a" style="left:912px;top:763.5px;width:865px;height:24.5px;background:#484848;"></div>
<div class="a" style="left:912px;top:763.5px;width:865px;height:2.5px;background:#5a5a54;"></div>
<div class="a" style="left:914px;top:766.5px;width:315.5px;height:20.5px;background:#6c6c6c;"></div>
<div class="a" style="left:1755px;top:766.5px;width:20.5px;height:20.5px;background:#6b6b6b;"></div>
<svg class="a" style="left:1759px;top:770px;" width="12" height="14" viewBox="0 0 12 14"><path d="M2.8 2.8L11.8 7.6L2.8 12.4Z" fill="#f4f4f4"/></svg>
<div class="a" style="left:1776.5px;top:764px;width:22.5px;height:23.5px;background:#585858;"></div>
<div class="a" style="left:379px;top:51px;width:533px;height:790px;background:#8a8a8a;"></div>
<div class="a" style="left:380px;top:52px;width:531px;height:38px;background:#4d4d4d;"></div>
<div class="a" style="left:380px;top:90px;width:531px;height:58px;background:#434343;"></div>
<div class="a" style="left:380px;top:147px;width:531px;height:700px;background:#676767;"></div>
<div class="a" style="left:380px;top:146.5px;width:531px;height:2.5px;background:#555555;"></div>
<span id="t74" class="t" style="top:65.14px;font-size:14.6px;color:#f0f0f0;left:391.20px;letter-spacing:0.151px;">Inspection - Property Sheet -</span>
<span id="t75" class="t" style="top:65.14px;font-size:14.6px;color:#f0f0f0;left:586.40px;letter-spacing:-0.152px;">FindPatMaxRedLine</span>
<div class="a" style="left:763px;top:70px;width:13px;height:1.4px;background:#f0f0f0;"></div>
<div class="a" style="left:819.5px;top:65px;width:12.5px;height:12.5px;border:1.4px solid #f0f0f0;"></div>
<svg class="a" style="left:877px;top:65px;" width="12" height="12" viewBox="0 0 12 12"><path d="M.5 .5L11.5 11.5M11.5 .5L.5 11.5" stroke="#f0f0f0" stroke-width="1.4"/></svg>
<span id="t76" class="t" style="top:94.81px;font-size:14.4px;color:#f0f0f0;left:389.20px;letter-spacing:0.062px;">Edit</span>
<span id="t77" class="t" style="top:94.81px;font-size:14.4px;color:#f0f0f0;left:431.20px;letter-spacing:0.400px;">Insert</span>
<span id="t78" class="t" style="top:94.81px;font-size:14.4px;color:#f0f0f0;left:485.20px;letter-spacing:0.797px;">Help</span>
<svg class="a" style="left:386px;top:120px;" width="7" height="24" viewBox="0 0 7 24"><g fill="#c8c8c8"><rect x="0" y="0.00" width="1.25" height="1.25"/><rect x="5.2" y="0.00" width="1.25" height="1.25"/><rect x="2.6" y="2.47" width="1.25" height="1.25"/><rect x="0" y="4.94" width="1.25" height="1.25"/><rect x="5.2" y="4.94" width="1.25" height="1.25"/><rect x="2.6" y="7.41" width="1.25" height="1.25"/><rect x="0" y="9.88" width="1.25" height="1.25"/><rect x="5.2" y="9.88" width="1.25" height="1.25"/><rect x="2.6" y="12.35" width="1.25" height="1.25"/><rect x="0" y="14.82" width="1.25" height="1.25"/><rect x="5.2" y="14.82" width="1.25" height="1.25"/><rect x="2.6" y="17.29" width="1.25" height="1.25"/><rect x="0" y="19.76" width="1.25" height="1.25"/><rect x="5.2" y="19.76" width="1.25" height="1.25"/><rect x="2.6" y="22.23" width="1.25" height="1.25"/></g></svg>
<svg class="a" style="left:397.9px;top:121px;" width="20" height="20" viewBox="0 0 20 20"><rect x="0" y="0" width="20" height="20" fill="#f2f2f2"/><g stroke="#3c3c3c" stroke-width="1.3" fill="none"><path d="M1 6.75h4.6M1 11h4.6M1 14.3h4.6M1 17.6h5M15.4 17.6h3.2"/><path d="M5.4 2.6V17.6M18 2.6V18.2" stroke-width="1.25"/></g><text x="11.6" y="15.9" font-size="15.4" font-weight="bold" text-anchor="middle" fill="#3c3c3c" stroke="#3c3c3c" stroke-width=".5" font-family="Liberation Sans, sans-serif">$</text><path d="M11.65 2.4v15.8" stroke="#3c3c3c" stroke-width="1.3"/></svg>
<svg class="a" style="left:425.2px;top:121px;" width="20" height="20" viewBox="0 0 20 20"><rect x="0" y="0" width="20" height="20" fill="#f2f2f2"/><g stroke="#3c3c3c" stroke-width="1.3"><path d="M1.5 6.75h17.7"/><path d="M1.5 10.9h17.7"/><path d="M1.5 14.3h17.7"/><path d="M1.5 18h17.7"/><path d="M5.6 2.6v15.4"/><path d="M12.2 2.6v15.4"/><path d="M18.6 2.6v15.4"/></g></svg>
<svg class="a" style="left:454px;top:121px;" width="20" height="20" viewBox="0 0 20 20"><text x="0" y="15.5" font-size="17.5" font-style="italic" font-weight="bold" fill="#707070" fill-opacity=".3" stroke="#707070" stroke-width="1.1" font-family="Liberation Serif, serif">fx</text></svg>
<svg class="a" style="left:480.2px;top:121px;" width="20" height="20" viewBox="0 0 20 20"><rect x=".8" y=".8" width="14.6" height="13.4" fill="none" stroke="#a8a8a8" stroke-width="1.4"/><rect x="3.5" y="3.5" width="9.2" height="8" fill="none" stroke="#a8a8a8" stroke-width="1.4"/><path d="M12.4 12.2l7 2.4l-2.8 1l2.8 2.9l-1.5 1.5l-2.9-2.8l-1 2.8z" fill="#444" stroke="#a8a8a8" stroke-width="1.2"/></svg>
<svg class="a" style="left:507.8px;top:121.1px;" width="20" height="20" viewBox="0 0 20 20"><rect x="6.2" y="6.2" width="7.6" height="7.6" fill="none" stroke="#b0b0b0" stroke-width="1.7"/><path d="M0.6 6.0V0.6H6.0Z" fill="#b0b0b0" fill-opacity=".55" stroke="#b0b0b0" stroke-width="1.3" stroke-linejoin="round"/><path d="M2.6 2.6L6.3999999999999995 6.3999999999999995" stroke="#b0b0b0" stroke-width="1.8"/><path d="M19.4 6.0V0.6H13.999999999999998Z" fill="#b0b0b0" fill-opacity=".55" stroke="#b0b0b0" stroke-width="1.3" stroke-linejoin="round"/><path d="M17.4 2.6L13.599999999999998 6.3999999999999995" stroke="#b0b0b0" stroke-width="1.8"/><path d="M0.6 13.999999999999998V19.4H6.0Z" fill="#b0b0b0" fill-opacity=".55" stroke="#b0b0b0" stroke-width="1.3" stroke-linejoin="round"/><path d="M2.6 17.4L6.3999999999999995 13.599999999999998" stroke="#b0b0b0" stroke-width="1.8"/><path d="M19.4 13.999999999999998V19.4H13.999999999999998Z" fill="#b0b0b0" fill-opacity=".55" stroke="#b0b0b0" stroke-width="1.3" stroke-linejoin="round"/><path d="M17.4 17.4L13.599999999999998 13.599999999999998" stroke="#b0b0b0" stroke-width="1.8"/></svg>
<svg class="a" style="left:534.8px;top:120.6px;" width="21" height="21" viewBox="0 0 21 21"><circle cx="10.5" cy="10.5" r="9.2" fill="none" stroke="#eeeeee" stroke-width="1.5"/><text x="10.5" y="15.6" font-size="14" font-weight="bold" text-anchor="middle" fill="#eeeeee" font-family="Liberation Sans, sans-serif">?</text></svg>
<svg class="a" style="left:564px;top:136px;" width="8" height="7" viewBox="0 0 8 7"><g fill="#e8e8e8"><rect x="0" y="0" width="8" height="1.4"/><path d="M0 3h8l-4 4z"/></g></svg>
<div class="a" style="left:885px;top:155px;width:21.5px;height:568.5px;background:#484848;"></div>
<div class="a" style="left:885px;top:155px;width:21.5px;height:477.4px;background:#6c6c6c;border:1px solid #7c7c7c;"></div>
<div class="a" style="left:885px;top:155px;width:21.5px;height:21.5px;background:#6e6e6e;border:1px solid #7c7c7c;"></div>
<svg class="a" style="left:889px;top:160.6px;" width="14" height="12" viewBox="0 0 14 12"><path d="M7 2.2L11.9 9.6H2.1Z" fill="#f6f6f6"/></svg>
<div class="a" style="left:885px;top:702.5px;width:21.5px;height:21px;background:#6e6e6e;border:1px solid #7c7c7c;"></div>
<svg class="a" style="left:889px;top:707px;" width="14" height="12" viewBox="0 0 14 12"><path d="M2.1 2.4H11.9L7 9.8Z" fill="#f6f6f6"/></svg>
<span id="t79" class="t" style="top:165.11px;font-size:14.4px;color:#f0f0f0;left:407.70px;letter-spacing:0.375px;">Image</span>
<div class="a" style="left:537px;top:159.10000000000002px;width:230.5px;height:23.4px;background:#494949;border:1px solid #7e7e7e;"></div>
<span id="t80" class="t" style="top:165.11px;font-size:14.4px;color:#3f86d8;left:545.20px;letter-spacing:0.464px;">$A$0</span>
<span id="t81" class="t" style="top:165.11px;font-size:14.4px;color:#f0f0f0;left:776.50px;">=</span>
<div class="a" style="left:790.5px;top:167.0px;width:11.2px;height:9.8px;border:1.2px solid #f0f0f0;border-right-width:2.4px;border-bottom-width:2px;"></div>
<span id="t82" class="t" style="top:165.11px;font-size:14.4px;color:#f0f0f0;left:803.00px;letter-spacing:0.425px;">Image</span>
<svg class="a" style="left:389px;top:196.20000000000002px;" width="15" height="15" viewBox="0 0 15 15"><rect x=".65" y=".65" width="13.7" height="13.4" fill="#5c5c5c" stroke="#f0f0f0" stroke-width="1.3"/><rect x="3" y="3" width="9" height="8.8" fill="#f4f4f4"/><path d="M4 7.4h7" stroke="#14508c" stroke-width="2.3"/><path d="M7.5 3.9v7" stroke="#14508c" stroke-width="2.3"/></svg>
<span id="t83" class="t" style="top:197.71px;font-size:14.4px;color:#f0f0f0;left:407.70px;letter-spacing:0.086px;">Fixture</span>
<span id="t84" class="t" style="top:197.71px;font-size:14.4px;color:#f0f0f0;left:536.20px;letter-spacing:-0.081px;">(39.872,42.998,0.022)</span>
<div class="a" style="left:861px;top:193.6px;width:19.5px;height:19.5px;background:#474747;border:1px solid #787878;"></div>
<svg class="a" style="left:865px;top:197.8px;" width="12" height="13" viewBox="0 0 12 13"><path d="M1.8 3.6L4.6 4.6M1.8 3.4Q4.6 .8 8.2 2.4T9 7.6L5.4 10.6" fill="none" stroke="#7cb0dc" stroke-width="3" stroke-linecap="round" stroke-linejoin="round"/><path d="M1.8 3.6L4.6 4.6M1.8 3.4Q4.6 .8 8.2 2.4T9 7.6L5.4 10.6" fill="none" stroke="#2c5888" stroke-width="1" stroke-linecap="round" stroke-linejoin="round"/></svg>
<svg class="a" style="left:389px;top:228.8px;" width="15" height="15" viewBox="0 0 15 15"><rect x=".65" y=".65" width="13.7" height="13.4" fill="#5c5c5c" stroke="#f0f0f0" stroke-width="1.3"/><rect x="3" y="3" width="9" height="8.8" fill="#f4f4f4"/><path d="M4 7.4h7" stroke="#14508c" stroke-width="2.3"/><path d="M7.5 3.9v7" stroke="#14508c" stroke-width="2.3"/></svg>
<span id="t85" class="t" style="top:230.31px;font-size:14.4px;color:#f0f0f0;left:407.70px;letter-spacing:0.089px;">Find Region</span>
<span id="t86" class="t" style="top:230.31px;font-size:14.4px;color:#f0f0f0;left:536.20px;letter-spacing:0.001px;">(-12.01,-37.925,110.534,226.807,-0.022,0)</span>
<div class="a" style="left:861px;top:226.2px;width:19.5px;height:19.5px;background:#474747;border:1px solid #787878;"></div>
<svg class="a" style="left:865px;top:230.4px;" width="12" height="13" viewBox="0 0 12 13"><path d="M1.8 3.6L4.6 4.6M1.8 3.4Q4.6 .8 8.2 2.4T9 7.6L5.4 10.6" fill="none" stroke="#7cb0dc" stroke-width="3" stroke-linecap="round" stroke-linejoin="round"/><path d="M1.8 3.6L4.6 4.6M1.8 3.4Q4.6 .8 8.2 2.4T9 7.6L5.4 10.6" fill="none" stroke="#2c5888" stroke-width="1" stroke-linecap="round" stroke-linejoin="round"/></svg>
<span id="t87" class="t" style="top:262.81px;font-size:14.4px;color:#f0f0f0;left:407.70px;letter-spacing:0.007px;">External Region</span>
<div class="a" style="left:537px;top:256.8px;width:230.5px;height:23.4px;background:#494949;border:1px solid #7e7e7e;"></div>
<span id="t88" class="t" style="top:262.81px;font-size:14.4px;color:#f0f0f0;left:545.50px;">0</span>
<div class="a" style="left:383.5px;top:285px;width:501px;height:32.5px;background:#8c8c8c;"></div>
<span id="t89" class="t" style="top:295.41px;font-size:14.4px;color:#f0e830;left:407.70px;letter-spacing:0.099px;">Pattern</span>
<div class="a" style="left:537px;top:290.1px;width:230.5px;height:22px;background:#494949;"></div>
<span id="t90" class="t" style="top:295.41px;font-size:14.4px;color:#3f86d8;left:545.20px;letter-spacing:0.094px;">$B$12</span>
<span id="t91" class="t" style="top:295.41px;font-size:14.4px;color:#f0e830;left:776.50px;">=</span>
<div class="a" style="left:790.5px;top:297.3px;width:11.2px;height:9.8px;border:1.2px solid #f0e830;border-right-width:2.4px;border-bottom-width:2px;"></div>
<span id="t92" class="t" style="top:295.41px;font-size:14.4px;color:#f0e830;left:803.00px;letter-spacing:0.015px;">Patterns</span>
<div class="a" style="left:861px;top:291.3px;width:19.5px;height:19.5px;background:#474747;border:1px solid #787878;"></div>
<svg class="a" style="left:865px;top:295.5px;" width="12" height="13" viewBox="0 0 12 13"><path d="M1.8 3.6L4.6 4.6M1.8 3.4Q4.6 .8 8.2 2.4T9 7.6L5.4 10.6" fill="none" stroke="#7cb0dc" stroke-width="3" stroke-linecap="round" stroke-linejoin="round"/><path d="M1.8 3.6L4.6 4.6M1.8 3.4Q4.6 .8 8.2 2.4T9 7.6L5.4 10.6" fill="none" stroke="#2c5888" stroke-width="1" stroke-linecap="round" stroke-linejoin="round"/></svg>
<span id="t93" class="t" style="top:327.81px;font-size:14.4px;color:#f0f0f0;left:407.70px;letter-spacing:0.386px;">Number to Find</span>
<div class="a" style="left:537px;top:321.8px;width:230.5px;height:23.4px;background:#494949;border:1px solid #7e7e7e;"></div>
<div class="a" style="left:744.5px;top:321.8px;width:1px;height:23.4px;background:#7e7e7e;"></div>
<svg class="a" style="left:752.5px;top:326.5px;" width="8" height="14" viewBox="0 0 8 14"><path d="M4 1.2L7 5.2H1Z" fill="#f0f0f0"/><path d="M1 9.4H7L4 13.2Z" fill="#f0f0f0"/></svg>
<span id="t94" class="t" style="top:327.81px;font-size:14.4px;color:#f0f0f0;right:1071.50px;">1</span>
<span id="t95" class="t" style="top:360.41px;font-size:14.4px;color:#f0f0f0;left:407.70px;letter-spacing:0.184px;">Accept Threshold</span>
<div class="a" style="left:537px;top:354.40000000000003px;width:230.5px;height:23.4px;background:#494949;border:1px solid #7e7e7e;"></div>
<div class="a" style="left:744.5px;top:354.40000000000003px;width:1px;height:23.4px;background:#7e7e7e;"></div>
<svg class="a" style="left:752.5px;top:359.1px;" width="8" height="14" viewBox="0 0 8 14"><path d="M4 1.2L7 5.2H1Z" fill="#f0f0f0"/><path d="M1 9.4H7L4 13.2Z" fill="#f0f0f0"/></svg>
<span id="t96" class="t" style="top:360.41px;font-size:14.4px;color:#f0f0f0;right:1071.50px;">50.000</span>
<span id="t97" class="t" style="top:392.61px;font-size:14.4px;color:#f0f0f0;left:407.70px;letter-spacing:0.265px;">Ignore Polarity</span>
<div class="a" style="left:537px;top:390.3px;width:16px;height:16px;background:#494949;border:1px solid #7e7e7e;"></div>
<span id="t98" class="t" style="top:427.31px;font-size:14.4px;color:#f0f0f0;left:407.70px;letter-spacing:0.276px;">Accuracy Mode</span>
<div class="a" style="left:537px;top:418.5px;width:230.5px;height:29px;background:#494949;border:1px solid #7e7e7e;"></div>
<span id="t99" class="t" style="top:427.31px;font-size:14.4px;color:#f0f0f0;left:540.20px;letter-spacing:0.964px;">High</span>
<svg class="a" style="left:749px;top:429.5px;" width="13" height="8" viewBox="0 0 13 8"><path d="M1 1l5.5 5.5L12 1" fill="none" stroke="#e0e0e0" stroke-width="1.4"/></svg>
<span id="t100" class="t" style="top:427.31px;font-size:14.4px;color:#f0f0f0;left:775.70px;letter-spacing:0.547px;">= 1</span>
<span id="t101" class="t" style="top:461.21px;font-size:14.4px;color:#f0f0f0;left:407.70px;letter-spacing:0.154px;">Clutter in Score</span>
<div class="a" style="left:537px;top:458.9px;width:16px;height:16px;background:#494949;border:1px solid #7e7e7e;"></div>
<span id="t102" class="t" style="top:494.11px;font-size:14.4px;color:#f0f0f0;left:407.70px;letter-spacing:0.199px;">Contrast Threshold</span>
<div class="a" style="left:537px;top:488.1px;width:230.5px;height:23.4px;background:#494949;border:1px solid #7e7e7e;"></div>
<div class="a" style="left:744.5px;top:488.1px;width:1px;height:23.4px;background:#7e7e7e;"></div>
<svg class="a" style="left:752.5px;top:492.8px;" width="8" height="14" viewBox="0 0 8 14"><path d="M4 1.2L7 5.2H1Z" fill="#f0f0f0"/><path d="M1 9.4H7L4 13.2Z" fill="#f0f0f0"/></svg>
<span id="t103" class="t" style="top:494.11px;font-size:14.4px;color:#f0f0f0;right:1071.50px;">0.000</span>
<svg class="a" style="left:389px;top:525.4px;" width="15" height="15" viewBox="0 0 15 15"><rect x=".65" y=".65" width="13.7" height="13.4" fill="#5c5c5c" stroke="#f0f0f0" stroke-width="1.3"/><rect x="3" y="3" width="9" height="8.8" fill="#f4f4f4"/><path d="M4 7.4h7" stroke="#14508c" stroke-width="2.3"/></svg>
<span id="t104" class="t" style="top:526.91px;font-size:14.4px;color:#f0f0f0;left:407.70px;letter-spacing:0.012px;">Find Tolerances</span>
<span id="t105" class="t" style="top:526.91px;font-size:14.4px;color:#f0f0f0;left:536.20px;letter-spacing:0.034px;">(-180,180,100,100)</span>
<div class="a" style="left:861px;top:522.8000000000001px;width:19.5px;height:19.5px;background:#474747;border:1px solid #787878;"></div>
<svg class="a" style="left:865px;top:527.0px;" width="12" height="13" viewBox="0 0 12 13"><path d="M1.8 3.6L4.6 4.6M1.8 3.4Q4.6 .8 8.2 2.4T9 7.6L5.4 10.6" fill="none" stroke="#7cb0dc" stroke-width="3" stroke-linecap="round" stroke-linejoin="round"/><path d="M1.8 3.6L4.6 4.6M1.8 3.4Q4.6 .8 8.2 2.4T9 7.6L5.4 10.6" fill="none" stroke="#2c5888" stroke-width="1" stroke-linecap="round" stroke-linejoin="round"/></svg>
<span id="t106" class="t" style="top:559.41px;font-size:14.4px;color:#f0f0f0;left:431.70px;letter-spacing:0.230px;">Angle Start</span>
<div class="a" style="left:537px;top:553.4px;width:230.5px;height:23.4px;background:#494949;border:1px solid #7e7e7e;"></div>
<div class="a" style="left:744.5px;top:553.4px;width:1px;height:23.4px;background:#7e7e7e;"></div>
<svg class="a" style="left:752.5px;top:558.1px;" width="8" height="14" viewBox="0 0 8 14"><path d="M4 1.2L7 5.2H1Z" fill="#f0f0f0"/><path d="M1 9.4H7L4 13.2Z" fill="#f0f0f0"/></svg>
<span id="t107" class="t" style="top:559.41px;font-size:14.4px;color:#f0f0f0;right:1071.50px;">-180.000</span>
<div class="a" style="left:861px;top:555.3000000000001px;width:19.5px;height:19.5px;background:#474747;border:1px solid #787878;"></div>
<svg class="a" style="left:865px;top:559.5px;" width="12" height="13" viewBox="0 0 12 13"><path d="M1.8 3.6L4.6 4.6M1.8 3.4Q4.6 .8 8.2 2.4T9 7.6L5.4 10.6" fill="none" stroke="#7cb0dc" stroke-width="3" stroke-linecap="round" stroke-linejoin="round"/><path d="M1.8 3.6L4.6 4.6M1.8 3.4Q4.6 .8 8.2 2.4T9 7.6L5.4 10.6" fill="none" stroke="#2c5888" stroke-width="1" stroke-linecap="round" stroke-linejoin="round"/></svg>
<span id="t108" class="t" style="top:591.81px;font-size:14.4px;color:#f0f0f0;left:431.70px;letter-spacing:0.135px;">Angle End</span>
<div class="a" style="left:537px;top:585.8px;width:230.5px;height:23.4px;background:#494949;border:1px solid #7e7e7e;"></div>
<div class="a" style="left:744.5px;top:585.8px;width:1px;height:23.4px;background:#7e7e7e;"></div>
<svg class="a" style="left:752.5px;top:590.5px;" width="8" height="14" viewBox="0 0 8 14"><path d="M4 1.2L7 5.2H1Z" fill="#f0f0f0"/><path d="M1 9.4H7L4 13.2Z" fill="#f0f0f0"/></svg>
<span id="t109" class="t" style="top:591.81px;font-size:14.4px;color:#f0f0f0;right:1071.50px;">180.000</span>
<div class="a" style="left:861px;top:587.7px;width:19.5px;height:19.5px;background:#474747;border:1px solid #787878;"></div>
<svg class="a" style="left:865px;top:591.9px;" width="12" height="13" viewBox="0 0 12 13"><path d="M1.8 3.6L4.6 4.6M1.8 3.4Q4.6 .8 8.2 2.4T9 7.6L5.4 10.6" fill="none" stroke="#7cb0dc" stroke-width="3" stroke-linecap="round" stroke-linejoin="round"/><path d="M1.8 3.6L4.6 4.6M1.8 3.4Q4.6 .8 8.2 2.4T9 7.6L5.4 10.6" fill="none" stroke="#2c5888" stroke-width="1" stroke-linecap="round" stroke-linejoin="round"/></svg>
<span id="t110" class="t" style="top:624.61px;font-size:14.4px;color:#f0f0f0;left:431.70px;letter-spacing:-0.089px;">Scale Start</span>
<div class="a" style="left:537px;top:618.5999999999999px;width:230.5px;height:23.4px;background:#494949;border:1px solid #7e7e7e;"></div>
<div class="a" style="left:744.5px;top:618.5999999999999px;width:1px;height:23.4px;background:#7e7e7e;"></div>
<svg class="a" style="left:752.5px;top:623.3px;" width="8" height="14" viewBox="0 0 8 14"><path d="M4 1.2L7 5.2H1Z" fill="#f0f0f0"/><path d="M1 9.4H7L4 13.2Z" fill="#f0f0f0"/></svg>
<span id="t111" class="t" style="top:624.61px;font-size:14.4px;color:#f0f0f0;right:1071.50px;">100.000</span>
<span id="t112" class="t" style="top:656.81px;font-size:14.4px;color:#f0f0f0;left:431.70px;letter-spacing:-0.264px;">Scale End</span>
<div class="a" style="left:537px;top:650.8px;width:230.5px;height:23.4px;background:#494949;border:1px solid #7e7e7e;"></div>
<div class="a" style="left:744.5px;top:650.8px;width:1px;height:23.4px;background:#7e7e7e;"></div>
<svg class="a" style="left:752.5px;top:655.5px;" width="8" height="14" viewBox="0 0 8 14"><path d="M4 1.2L7 5.2H1Z" fill="#f0f0f0"/><path d="M1 9.4H7L4 13.2Z" fill="#f0f0f0"/></svg>
<span id="t113" class="t" style="top:656.81px;font-size:14.4px;color:#f0f0f0;right:1071.50px;">100.000</span>
<span id="t114" class="t" style="top:689.31px;font-size:14.4px;color:#f0f0f0;left:407.70px;letter-spacing:-0.092px;">XY Overlap</span>
<div class="a" style="left:537px;top:683.3px;width:230.5px;height:23.4px;background:#494949;border:1px solid #7e7e7e;"></div>
<div class="a" style="left:744.5px;top:683.3px;width:1px;height:23.4px;background:#7e7e7e;"></div>
<svg class="a" style="left:752.5px;top:688px;" width="8" height="14" viewBox="0 0 8 14"><path d="M4 1.2L7 5.2H1Z" fill="#f0f0f0"/><path d="M1 9.4H7L4 13.2Z" fill="#f0f0f0"/></svg>
<span id="t115" class="t" style="top:689.31px;font-size:14.4px;color:#f0f0f0;right:1071.50px;">70.000</span>
<div class="a" style="left:380px;top:716px;width:505px;height:15.4px;overflow:hidden;">
<svg class="a" style="left:9px;top:3.2px;" width="15" height="15" viewBox="0 0 15 15"><rect x=".65" y=".65" width="13.7" height="13.4" fill="#5c5c5c" stroke="#f0f0f0" stroke-width="1.3"/><rect x="3" y="3" width="9" height="8.8" fill="#f4f4f4"/><path d="M4 7.4h7" stroke="#14508c" stroke-width="2.3"/><path d="M7.5 3.9v7" stroke="#14508c" stroke-width="2.3"/></svg>
<span class="t" style="left:28.5px;top:4.11px;font-size:14.4px;color:#f0f0f0;">Advanced Settings</span>
<span class="t" style="left:157px;top:4.11px;font-size:14.4px;color:#f0f0f0;">(0,60)</span>
</div>
<svg class="a" style="left:384px;top:724.2px;" width="523" height="7.4" viewBox="0 0 523 7.4"><defs><pattern id="dp" width="4" height="4" patternUnits="userSpaceOnUse"><rect x="0" y="0" width="1.3" height="1.3" fill="#d4d4d4"/><rect x="2" y="2" width="1.3" height="1.3" fill="#d4d4d4"/></pattern></defs><rect x="0" y="0" width="523" height="7.4" fill="#676767" fill-opacity=".72"/><rect x="0" y="0" width="523" height="7.4" fill="url(#dp)"/></svg>
<span id="t116" class="t" style="top:739.23px;font-size:15.8px;color:#f4f4f4;font-weight:700;left:388.40px;letter-spacing:0.294px;">Pattern</span>
<span id="t117" class="t" style="top:764.21px;font-size:14.4px;color:#f0f0f0;left:390.40px;letter-spacing:0.153px;">Specifies a  reference to a TrainPatMaxRedLine cell that defines the pattern to</span>
<span id="t118" class="t" style="top:784.11px;font-size:14.4px;color:#f0f0f0;left:390.40px;letter-spacing:0.274px;">find.</span>
<svg class="a" style="left:0px;top:0px;" width="1812" height="828" viewBox="0 0 1812 828"><rect x="108.10" y="171.40" width="138.10" height="258.60" fill="none" stroke="#f5a91c" stroke-width="4.8"/><rect x="576.45" y="50.45" width="149.00" height="46.90" fill="none" stroke="#22b04c" stroke-width="5.1"/><rect x="373.20" y="177.70" width="325.20" height="36.60" fill="none" stroke="#80d2f7" stroke-width="4.8"/><rect x="380.55" y="220.35" width="443.00" height="33.00" fill="none" stroke="#f5a91c" stroke-width="4.9"/><rect x="377.80" y="274.10" width="228.90" height="49.90" fill="none" stroke="#e0201f" stroke-width="5.6"/><rect x="416.30" y="551.70" width="357.30" height="64.60" fill="none" stroke="#ffe41c" stroke-width="5"/><rect x="1090.80" y="367.50" width="278.80" height="42.70" fill="none" stroke="#80d2f7" stroke-width="4.8"/><rect x="1065.40" y="493.30" width="117.00" height="45.00" fill="none" stroke="#e0201f" stroke-width="4.8"/></svg>
</body></html>
